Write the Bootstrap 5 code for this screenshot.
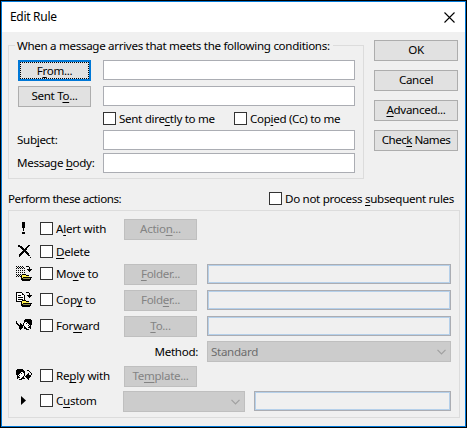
<!DOCTYPE html>
<html lang="en">
<head>
<meta charset="utf-8">
<meta name="viewport" content="width=device-width, initial-scale=1">
<title>Edit Rule</title>
<link href="https://cdn.jsdelivr.net/npm/bootstrap@5.3.0/dist/css/bootstrap.min.css" rel="stylesheet">
<style>
body{font:11.6px/16px "Noto Sans","Open Sans",sans-serif;color:#000;background:#000;letter-spacing:-.32px;white-space:nowrap;overflow:hidden}
u{text-underline-offset:2px;text-decoration-thickness:1px;text-decoration-skip-ink:none}
.dialog{width:467px;height:428px;border:1px solid #000;background:#f0f0f0}
.dialog-frame{height:426px;border:1px solid #0078d7}
.titlebar{height:30px;padding:0 10px 0 8px}
.titlebar .name{font-size:12px;letter-spacing:-.3px}
.content{padding:8px 7px 0 6px}
.upper{height:146px}
.conditions{width:356px;height:134px;border:1px solid #dcdcdc;margin-top:5px;padding:0 8px 0 9px}
.group-title{height:16px;width:318px;margin:-8px 0 6px -3px;padding-left:2px;background:#f0f0f0}
.line{height:26px}
.caption-cell{width:85px;flex:none}
.checks{height:13px}
.checks label:first-child{margin-left:85px;width:131px}
.text-line{height:20px;margin-top:3px}
.checks+.text-line{margin-top:5px}
.text-line .caption-cell{line-height:20px;margin-left:-1px;width:86px}
.side{width:84px;gap:9px}
.btn.key{font-size:11.6px;line-height:18px;height:21px;width:73px;padding:0 0 1px;border:1px solid #adadad;border-radius:0;background:#e1e1e1;color:#000;letter-spacing:inherit}
.side .btn.key{width:84px}
.side .btn.key:last-child{letter-spacing:-.5px}
.btn.key.default{border:2px solid #0078d7;padding:0;line-height:17px;outline:1px dotted #000;outline-offset:-3px}
.btn.key:disabled{background:#ccc;border-color:#bfbfbf;color:#838383;opacity:1}
.form-control.field{height:20px;min-height:0;border:1px solid #abadb3;border-radius:0;padding:0;background:#fff}
.form-control.field:disabled{background:#f0f0f0;box-shadow:inset 0 0 0 1px #b5d0ea}
.form-check-input.tick{width:13px;height:13px;margin:0 3px 0 0;border:1px solid #333;border-radius:0!important;background:#fff;float:none;flex:none}
.process{height:19px;margin-top:3px}
.process>span{letter-spacing:-.45px}
.process label{width:189px}
.actions{height:208px;width:452px;border:1px solid #dcdcdc;margin-top:2px;padding:8px 8px 0 7px}
.act{height:25px}
.act.alert-row{height:23px}
.act.delete-row{height:22px}
.act.folder-row{height:26px}
.act>label{width:84px;height:19px;flex:none;letter-spacing:-.23px}
.act .key{flex:none;margin-right:10px}
.glyph{width:16px;height:19px;flex:none;margin-right:8px}
.combo{height:21px;background:#ccc;border:1px solid #bfbfbf;color:#6d6d6d;padding:0 4px 0 3px}
.method>span{width:191px;padding-right:9px;text-align:right;line-height:22px;flex:none}
.act.custom>label{width:83px}
.custom .combo{width:122px;flex:none;margin-right:9px}
</style>
</head>
<body>
<main class="dialog"><div class="dialog-frame">
<header class="titlebar bg-white d-flex align-items-center justify-content-between">
<span class="name">Edit Rule</span>
<svg width="11" height="11" viewBox="0 0 11 11"><path d="M.5.5l10 10M10.5.5l-10 10" stroke="#000" stroke-width="1.1"/></svg>
</header>
<div class="content">
<div class="upper d-flex justify-content-between">
<section class="conditions">
<div class="group-title">When a message arrives that meets the following conditions:</div>
<div class="line d-flex"><div class="caption-cell"><button class="btn key default">F<u>r</u>om...</button></div><input class="form-control field" aria-label="From"></div>
<div class="line d-flex"><div class="caption-cell"><button class="btn key">Sent T<u>o</u>...</button></div><input class="form-control field" aria-label="Sent to"></div>
<div class="d-flex checks"><label class="d-flex align-items-center"><input type="checkbox" class="form-check-input tick"><span>Sent dire<u>c</u>tly to me</span></label><label class="d-flex align-items-center"><input type="checkbox" class="form-check-input tick"><span>Cop<u>i</u>ed (Cc) to me</span></label></div>
<div class="d-flex text-line"><label class="caption-cell">Sub<u>j</u>ect:</label><input class="form-control field" aria-label="Subject"></div>
<div class="d-flex text-line"><label class="caption-cell">Message <u>b</u>ody:</label><input class="form-control field" aria-label="Message body"></div>
</section>
<div class="side d-flex flex-column"><button class="btn key">OK</button><button class="btn key">Cancel</button><button class="btn key"><u>A</u>dvanced...</button><button class="btn key">Chec<u>k</u> Names</button></div>
</div>
<div class="process d-flex align-items-center justify-content-between"><span>Perform these actions:</span><label class="d-flex align-items-center"><input type="checkbox" class="form-check-input tick"><span>Do not process <u>s</u>ubsequent rules</span></label></div>
<section class="actions">
<div class="act d-flex align-items-start alert-row"><svg class="glyph" viewBox="0 0 16 19"><path d="M6 3h3v6H8v3H7V9H6zM6 13h3v2H6z" shape-rendering="crispEdges"/></svg><label class="d-flex align-items-center"><input type="checkbox" class="form-check-input tick"><span>A<u>l</u>ert with</span></label><button class="btn key" disabled>Actio<u>n</u>...</button></div>
<div class="act d-flex align-items-start delete-row"><svg class="glyph" viewBox="0 0 16 19" fill="none" stroke="#000" shape-rendering="crispEdges"><path d="M2 3.5h2M2 4.5h4M4 5.5h3M12 3.5h2M11 4.5h2M5 6.5h3M10 5.5h2M6 7.5h5M9 6.5h2M7 8.5h3M6 9.5h5M5 10.5h3M9 10.5h3M4 11.5h3M10 11.5h3M3 12.5h3M11 12.5h2M3 13.5h2M12 13.5h2M3 14.5h1M14 15.5h1"/></svg><label class="d-flex align-items-center"><input type="checkbox" class="form-check-input tick"><span><u>D</u>elete</span></label></div>
<div class="act d-flex align-items-start folder-row"><svg class="glyph" viewBox="0 0 16 19" shape-rendering="crispEdges"><path d="M6 11h4v1h3v2H6z" fill="#fff04a"/><path d="M7 14h7v1H6z" fill="#8f8f55"/><g fill="none" stroke="#000"><path d="M0 2.5h7M0 4.5h9M0 6.5h10M0 8.5h10M0 10.5h6M0 12.5h5M1 3.5h7M1 11.5h4" stroke-dasharray="1 1"/><path d="M10 2.5h3M13 3.5h1M13.5 3v5M11 5.5h5M12 6.5h3M6 10.5h4M5.5 11v5M10 11.5h3M7 13.5h9M6 14.5h1M14 14.5h1M5 15.5h10M6 16.5h8"/></g></svg><label class="d-flex align-items-center"><input type="checkbox" class="form-check-input tick"><span>Mo<u>v</u>e to</span></label><button class="btn key" disabled><u>F</u>older...</button><input class="form-control field" disabled aria-label="Move folder"></div>
<div class="act d-flex align-items-start folder-row"><svg class="glyph" viewBox="0 0 16 19" shape-rendering="crispEdges"><path d="M1 3h5l2 2v6H1z" fill="#fff"/><path d="M6 11h4v1h3v2H6z" fill="#fff04a"/><path d="M7 14h7v1H6z" fill="#8f8f55"/><g fill="none" stroke="#000"><path d="M.5 2v10M0 2.5h6M0 11.5h6M6.5 3v2M7 4.5h1M8.5 5v5M2 5.5h3M2 7.5h5M2 9.5h5M10 2.5h3M13 3.5h1M13.5 3v5M11 5.5h5M12 6.5h3M6 10.5h4M5.5 11v5M10 11.5h3M7 13.5h9M6 14.5h1M14 14.5h1M5 15.5h10M6 16.5h8"/></g></svg><label class="d-flex align-items-center"><input type="checkbox" class="form-check-input tick"><span>Cop<u>y</u> to</span></label><button class="btn key" disabled>Fold<u>e</u>r...</button><input class="form-control field" disabled aria-label="Copy folder"></div>
<div class="act d-flex align-items-start"><svg class="glyph" viewBox="0 0 16 19" shape-rendering="crispEdges"><path d="M8 6h6v6h-2v2h-2v-2H8z" fill="#fff"/><path fill="none" stroke="#000" d="M9 3.5h6M8 4.5h8M8 5.5h8M8 6.5h1M11 6.5h5M7 7.5h1M10 7.5h1M12 7.5h4M7 8.5h1M13 8.5h3M7 9.5h1M12 9.5h1M14 9.5h1M8 10.5h1M13 10.5h2M8 11.5h2M12 11.5h3M8 12.5h3M14 12.5h1M10 13.5h3M0 5.5h1M0 6.5h1M0 7.5h2M4 7.5h1M1 8.5h2M4 8.5h2M2 9.5h5M3 10.5h4M3 11.5h4M3 12.5h3M4 13.5h1"/></svg><label class="d-flex align-items-center"><input type="checkbox" class="form-check-input tick"><span>For<u>w</u>ard</span></label><button class="btn key" disabled><u>T</u>o...</button><input class="form-control field" disabled aria-label="Forward to"></div>
<div class="act d-flex align-items-start method"><span>Method:</span><div class="combo flex-grow-1 d-flex align-items-center justify-content-between"><span>Standard</span><svg width="9" height="6" viewBox="0 0 9 6"><path d="M.5.8l4 4 4-4" fill="none" stroke="#a0a0a0" stroke-width="1.2"/></svg></div></div>
<div class="act d-flex align-items-start"><svg class="glyph" viewBox="0 0 16 19" shape-rendering="crispEdges"><path d="M2 6h6v6H6v2H4v-2H2z" fill="#fff"/><path fill="none" stroke="#000" d="M1 3.5h6M0 4.5h8M0 5.5h9M0 6.5h5M7 6.5h2M0 7.5h4M5 7.5h1M8 7.5h1M0 8.5h3M8 8.5h1M1 9.5h1M3 9.5h1M8 9.5h1M1 10.5h2M7 10.5h1M1 11.5h3M6 11.5h2M1 12.5h1M5 12.5h4M3 13.5h3M11 4.5h2M13 5.5h1M14 6.5h1M12 7.5h1M15 7.5h1M11 8.5h2M15 8.5h1M10 9.5h5M9 10.5h6M10 11.5h4M11 12.5h2M12 13.5h1"/></svg><label class="d-flex align-items-center"><input type="checkbox" class="form-check-input tick"><span>Re<u>p</u>ly with</span></label><button class="btn key" disabled>Te<u>m</u>plate...</button></div>
<div class="act d-flex align-items-start custom"><svg class="glyph" viewBox="0 0 16 19"><path d="M5 5v9l5-4.5z"/></svg><label class="d-flex align-items-center"><input type="checkbox" class="form-check-input tick"><span>C<u>u</u>stom</span></label><div class="combo d-flex align-items-center justify-content-end"><svg width="9" height="6" viewBox="0 0 9 6"><path d="M.5.8l4 4 4-4" fill="none" stroke="#a0a0a0" stroke-width="1.2"/></svg></div><input class="form-control field" disabled aria-label="Custom value"></div>
</section>
</div>
</div></main>
<script src="https://cdn.jsdelivr.net/npm/bootstrap@5.3.0/dist/js/bootstrap.bundle.min.js"></script>
</body>
</html>
